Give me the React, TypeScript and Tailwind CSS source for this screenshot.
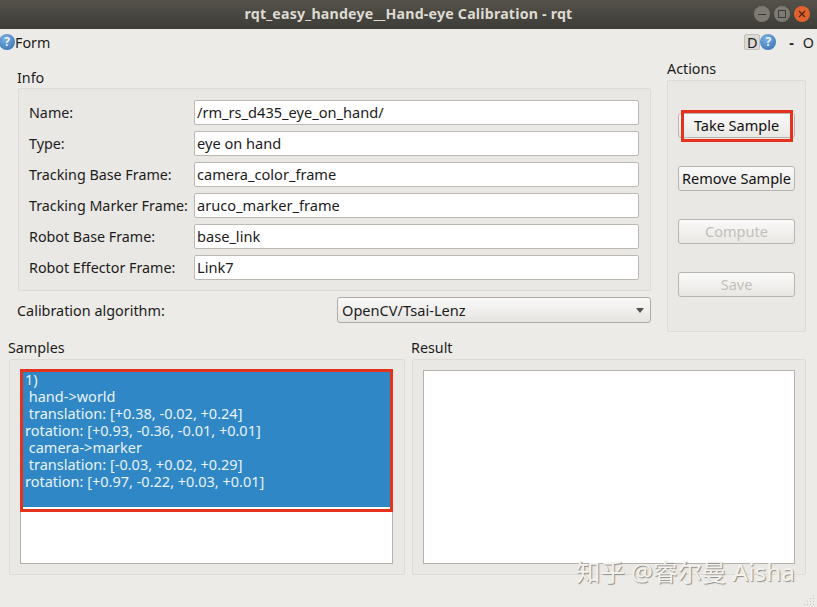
const FIELDS = [
  { label: "Name:", value: "/rm_rs_d435_eye_on_hand/" },
  { label: "Type:", value: "eye on hand" },
  { label: "Tracking Base Frame:", value: "camera_color_frame" },
  { label: "Tracking Marker Frame:", value: "aruco_marker_frame" },
  { label: "Robot Base Frame:", value: "base_link" },
  { label: "Robot Effector Frame:", value: "Link7" },
];

const SAMPLE_LINES = [
  "1)",
  " hand->world",
  " translation: [+0.38, -0.02, +0.24]",
  "rotation: [+0.93, -0.36, -0.01, +0.01]",
  " camera->marker",
  " translation: [-0.03, +0.02, +0.29]",
  "rotation: [+0.97, -0.22, +0.03, +0.01]",
];

function HelpIcon() {
  return (
    <span className="flex h-[16px] w-[16px] items-center justify-center rounded-full bg-[radial-gradient(circle_at_40%_30%,#7fb0e0,#2a6cb0)] text-[12px] font-bold leading-none text-[#e8f1fa]">
      ?
    </span>
  );
}

function PushButton({ label, disabled }: { label: string; disabled?: boolean }) {
  return (
    <div
      className={`flex h-[25px] w-[117px] items-center justify-center rounded-[3px] border border-[#b9b5ae] bg-gradient-to-b from-[#fafafa] to-[#e9e7e3] text-[14.5px] ${
        disabled ? "text-[#c2bfba]" : "text-[#111]"
      }`}
    >
      {label}
    </div>
  );
}

function WindowButton({ children, className }: { children: React.ReactNode; className: string }) {
  return (
    <span className={`flex h-[16px] w-[16px] items-center justify-center rounded-full text-[#3c3b37] ${className}`}>
      {children}
    </span>
  );
}

export default function App() {
  return (
    <div className="flex h-[607px] w-[817px] flex-col overflow-hidden bg-[#edebe7] font-['Noto_Sans',sans-serif] text-[14.3px] leading-[17px] text-[#1c1c1c]">
      {/* title bar */}
      <div className="relative flex h-[29px] shrink-0 items-center justify-center bg-gradient-to-b from-[#55524b] to-[#3d3c37] pb-[2px] text-[14.2px] font-bold tracking-[0.2px] text-[#dfdbd2]">
        rqt_easy_handeye__Hand-eye Calibration - rqt
        <div className="absolute right-[7px] top-[6px] flex gap-[4px]">
          <WindowButton className="bg-[#7d7a73]">
            <span className="h-[1px] w-[8px] bg-[#3c3b37]" />
          </WindowButton>
          <WindowButton className="bg-[#7d7a73]">
            <span className="h-[8px] w-[8px] border border-[#3c3b37]" />
          </WindowButton>
          <WindowButton className="bg-[#e2612c]">
            <svg width="8" height="8" viewBox="0 0 8 8" stroke="#4a2414" strokeWidth="1.3">
              <path d="M1 1l6 6M7 1L1 7" />
            </svg>
          </WindowButton>
        </div>
      </div>

      {/* plugin header */}
      <div className="flex h-[28px] shrink-0 items-center pb-[2px]">
        <span className="-ml-[1px]">
          <HelpIcon />
        </span>
        <span>Form</span>
        <div className="ml-auto flex items-center">
          <span className="flex h-[16px] w-[16px] items-center justify-center rounded-[2px] border border-[#c4c1bb] bg-[#dcdad5] text-[14.5px] text-[#1c1c1c]">
            D
          </span>
          <HelpIcon />
          <span className="ml-[13px] font-bold">-</span>
          <span className="ml-[9px] mr-[3px]">O</span>
        </div>
      </div>

      {/* info + actions */}
      <div className="flex shrink-0 pl-[17px]">
        <div className="w-[634px] pt-[13px]">
          <div className="h-[16px] leading-[16px]">Info</div>
          <div className="ml-[1px] mt-[2px] flex h-[203px] flex-col gap-[6px] rounded-[2px] border border-[#dedbd6] bg-[#eae8e4] pl-[10px] pr-[11px] pt-[11px]">
            {FIELDS.map((f) => (
              <div key={f.label} className="flex h-[25px] items-center">
                <span className="w-[165px] shrink-0 whitespace-nowrap">{f.label}</span>
                <span className="flex h-[25px] flex-1 items-center rounded-[2px] border border-[#bdb9b2] bg-white pl-[2px] text-[14.6px]">
                  {f.value}
                </span>
              </div>
            ))}
          </div>
          <div className="mt-[6px] flex h-[26px] items-center">
            <span className="w-[320px] text-[14.4px]">Calibration algorithm:</span>
            <div className="flex h-[26px] flex-1 items-center justify-between rounded-[3px] border border-[#b0aca5] bg-gradient-to-b from-[#fafafa] to-[#e6e4e0] pl-[4px] pr-[6px] text-[14.6px]">
              OpenCV/Tsai-Lenz
              <span className="h-0 w-0 border-x-[4px] border-t-[5px] border-x-transparent border-t-[#55524d]" />
            </div>
          </div>
        </div>

        <div className="ml-[16px]">
          <div className="h-[17px] pt-[4px] leading-[16px]">Actions</div>
          <div className="mt-[6px] flex h-[252px] w-[139px] flex-col items-center gap-[28px] rounded-[2px] border border-[#dedbd6] bg-[#eae8e4] pt-[32px]">
            <div className="relative">
              <PushButton label="Take Sample" />
              <span className="absolute -top-[3px] left-[3px] h-[32px] w-[112px] border-[3px] border-[#e5321f]" />
            </div>
            <PushButton label="Remove Sample" />
            <PushButton label="Compute" disabled />
            <PushButton label="Save" disabled />
          </div>
        </div>
      </div>

      {/* samples + result */}
      <div className="mt-[8px] flex shrink-0 gap-[6px] pl-[8px]">
        <div>
          <div className="h-[16px] leading-[16px]">Samples</div>
          <div className="ml-[1px] mt-[3px] h-[216px] w-[396px] rounded-[2px] border border-[#dedbd6] bg-[#eae8e4] pl-[10px] pt-[10px]">
            <div className="h-[194px] w-[373px] border border-[#b5b2ac] bg-white">
              <div className="-mx-[1px] -mt-[2px] h-[143px] border-[3px] border-[#e5321f] bg-white">
                <div className="h-[135px] whitespace-pre bg-[#2f87c6] pl-[2px] text-[14.5px] text-[#e9f3f9]">
                  <div className="-translate-y-[1px]">
                    {SAMPLE_LINES.map((line, i) => (
                      <div key={i} className="h-[17px]">
                        {line}
                      </div>
                    ))}
                  </div>
                </div>
              </div>
            </div>
          </div>
        </div>
        <div>
          <div className="h-[16px] leading-[16px]">Result</div>
          <div className="ml-[1px] mt-[3px] h-[216px] w-[394px] rounded-[2px] border border-[#dedbd6] bg-[#eae8e4] pl-[10px] pt-[10px]">
            <div className="h-[194px] w-[372px] border border-[#b5b2ac] bg-white" />
          </div>
        </div>
      </div>

      {/* watermark */}
      <div className="absolute left-[576px] top-[558px] whitespace-nowrap font-['Noto_Sans','Noto_Sans_CJK_SC',sans-serif] text-[24.4px] leading-[28px] text-[#f4f2ee] [text-shadow:1px_1px_1px_#8f8d88]">
        知乎 @睿尔曼 Aisha
      </div>

      {/* size grip */}
      <svg className="absolute left-[802px] top-[592px]" width="14" height="14" fill="#c9c6c0">
        <rect x="11" y="3" width="1" height="1" />
        <rect x="8" y="6" width="1" height="1" />
        <rect x="11" y="6" width="1" height="1" />
        <rect x="5" y="9" width="1" height="1" />
        <rect x="8" y="9" width="1" height="1" />
        <rect x="11" y="9" width="1" height="1" />
        <rect x="2" y="12" width="1" height="1" />
        <rect x="5" y="12" width="1" height="1" />
        <rect x="8" y="12" width="1" height="1" />
        <rect x="11" y="12" width="1" height="1" />
      </svg>
    </div>
  );
}
